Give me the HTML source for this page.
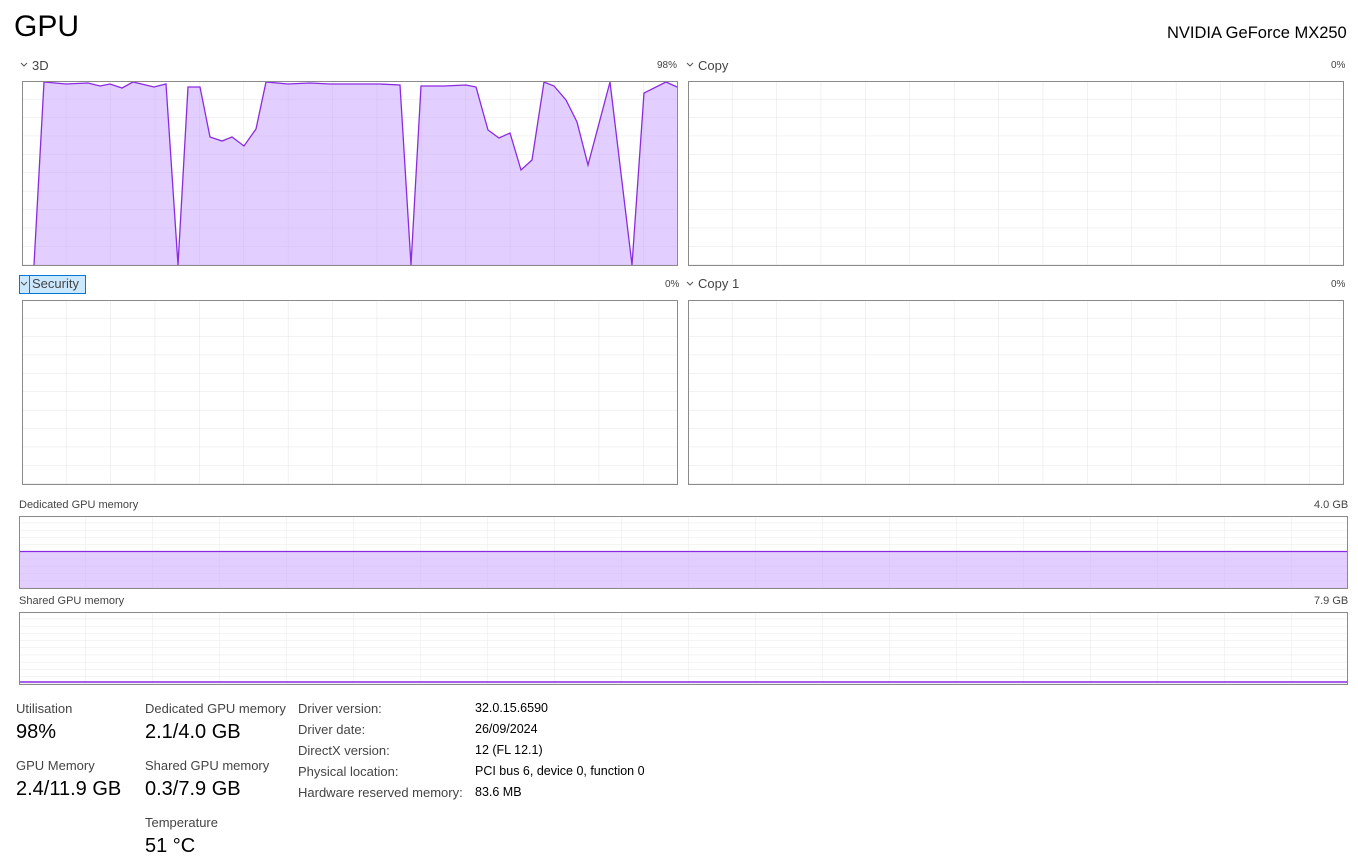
<!DOCTYPE html>
<html><head><meta charset="utf-8"><style>
body{margin:0;width:1358px;height:867px;background:#fff;font-family:"Liberation Sans",sans-serif;color:#000;position:relative;overflow:hidden}
.t{position:absolute;white-space:nowrap}
.s{font-size:12px;color:#444}
.l{font-size:13px;color:#444}
.v{font-size:20px;color:#000}
.d{font-size:12.5px;color:#000}
</style></head><body>
<svg width="1358" height="867" style="position:absolute;left:0;top:0">
<defs>
<pattern id="g1" x="22" y="81" width="44.4" height="18.4" patternUnits="userSpaceOnUse">
<path d="M44.4 0V18.4M0 18.4H44.4" stroke="#e4e4e4" stroke-width="1" fill="none"/></pattern>
<pattern id="g2" x="688" y="81" width="44.4" height="18.4" patternUnits="userSpaceOnUse">
<path d="M44.4 0V18.4M0 18.4H44.4" stroke="#e4e4e4" stroke-width="1" fill="none"/></pattern>
<pattern id="g3" x="22" y="300" width="44.4" height="18.4" patternUnits="userSpaceOnUse">
<path d="M44.4 0V18.4M0 18.4H44.4" stroke="#e4e4e4" stroke-width="1" fill="none"/></pattern>
<pattern id="g4" x="688" y="300" width="44.4" height="18.4" patternUnits="userSpaceOnUse">
<path d="M44.4 0V18.4M0 18.4H44.4" stroke="#e4e4e4" stroke-width="1" fill="none"/></pattern>
<pattern id="g5" x="19" y="516" width="67" height="7.2" patternUnits="userSpaceOnUse">
<path d="M67 0V7.2M0 7.2H67" stroke="#e8e8e8" stroke-width="1" fill="none"/></pattern>
<pattern id="g6" x="19" y="612" width="67" height="7.2" patternUnits="userSpaceOnUse">
<path d="M67 0V7.2M0 7.2H67" stroke="#e8e8e8" stroke-width="1" fill="none"/></pattern>
</defs>
<rect x="22" y="81" width="655" height="184" fill="url(#g1)"/>
<polygon fill="rgba(200,160,255,0.5)" points="34,265 44,82 66,84 88,83 100,86 110,84 122,88 133,82 154,87 166,84 178,265 188,87 200,87 210,137 222,141 232,137 244,146 256,129 266,82 288,84 310,83 330,84 355,84 380,84 400,85 411,265 421,86 444,86 466,85 476,87 488,130 499,138 510,133 521,170 532,160 544,82 554,86 566,100 577,122 588,165 610,82 632,265 644,93 666,82 677,87 677,265"/>
<polyline fill="none" stroke="#8a2be2" stroke-width="1.3" points="34,265 44,82 66,84 88,83 100,86 110,84 122,88 133,82 154,87 166,84 178,265 188,87 200,87 210,137 222,141 232,137 244,146 256,129 266,82 288,84 310,83 330,84 355,84 380,84 400,85 411,265 421,86 444,86 466,85 476,87 488,130 499,138 510,133 521,170 532,160 544,82 554,86 566,100 577,122 588,165 610,82 632,265 644,93 666,82 677,87"/>
<rect x="22.5" y="81.5" width="655" height="184" fill="none" stroke="#8a8a8a"/>
<rect x="688" y="81" width="655" height="184" fill="url(#g2)"/>
<rect x="688.5" y="81.5" width="655" height="184" fill="none" stroke="#8a8a8a"/>
<rect x="22" y="300" width="655" height="184" fill="url(#g3)"/>
<rect x="22.5" y="300.5" width="655" height="184" fill="none" stroke="#8a8a8a"/>
<rect x="688" y="300" width="655" height="184" fill="url(#g4)"/>
<rect x="688.5" y="300.5" width="655" height="184" fill="none" stroke="#8a8a8a"/>
<rect x="19" y="516" width="1328" height="72" fill="url(#g5)"/>
<rect x="19" y="551" width="1328" height="37" fill="rgba(200,160,255,0.5)"/>
<line x1="19" y1="551.5" x2="1347" y2="551.5" stroke="#8a2be2" stroke-width="1.3"/>
<line x1="19.5" y1="551" x2="19.5" y2="588" stroke="#8a2be2"/>
<rect x="19.5" y="516.5" width="1328" height="72" fill="none" stroke="#8a8a8a"/>
<rect x="19" y="612" width="1328" height="72" fill="url(#g6)"/>
<line x1="19" y1="682" x2="1347" y2="682" stroke="#8a2be2" stroke-width="1.5"/>
<rect x="19.5" y="612.5" width="1328" height="72" fill="none" stroke="#8a8a8a"/>
<rect x="19.5" y="275.5" width="66" height="18" fill="#cce8ff" stroke="#0078d7"/>
<line x1="29.5" y1="276" x2="29.5" y2="293" stroke="#0078d7"/>
<path d="M21 63l3 3 3-3" fill="none" stroke="#555"/>
<path d="M687 63l3 3 3-3" fill="none" stroke="#555"/>
<path d="M687 282l3 3 3-3" fill="none" stroke="#555"/>
<path d="M21 282l3 3 3-3" fill="none" stroke="#555"/>
</svg>
<div class="t" style="left:14px;top:10px;font-size:30px">GPU</div>
<div class="t" style="left:1167px;top:24px;font-size:16.5px">NVIDIA GeForce MX250</div>
<div class="t l" style="left:32px;top:58px">3D</div>
<div class="t s" style="left:657px;top:60px;font-size:10px">98%</div>
<div class="t l" style="left:698px;top:58px">Copy</div>
<div class="t s" style="left:1331px;top:60px;font-size:10px">0%</div>
<div class="t l" style="left:32px;top:276px">Security</div>
<div class="t s" style="left:665px;top:279px;font-size:10px">0%</div>
<div class="t l" style="left:698px;top:276px">Copy 1</div>
<div class="t s" style="left:1331px;top:279px;font-size:10px">0%</div>
<div class="t s" style="left:19px;top:499px;font-size:11px">Dedicated GPU memory</div>
<div class="t s" style="left:1314px;top:499px;font-size:11px">4.0 GB</div>
<div class="t s" style="left:19px;top:595px;font-size:11px">Shared GPU memory</div>
<div class="t s" style="left:1314px;top:595px;font-size:11px">7.9 GB</div>
<div class="t l" style="left:16px;top:701px">Utilisation</div>
<div class="t v" style="left:16px;top:721px">98%</div>
<div class="t l" style="left:16px;top:758px">GPU Memory</div>
<div class="t v" style="left:16px;top:778px">2.4/11.9 GB</div>
<div class="t l" style="left:145px;top:701px">Dedicated GPU memory</div>
<div class="t v" style="left:145px;top:721px">2.1/4.0 GB</div>
<div class="t l" style="left:145px;top:758px">Shared GPU memory</div>
<div class="t v" style="left:145px;top:778px">0.3/7.9 GB</div>
<div class="t l" style="left:145px;top:815px">Temperature</div>
<div class="t v" style="left:145px;top:835px">51 °C</div>
<div class="t l" style="left:298px;top:701px">Driver version:</div>
<div class="t l" style="left:298px;top:722px">Driver date:</div>
<div class="t l" style="left:298px;top:743px">DirectX version:</div>
<div class="t l" style="left:298px;top:764px">Physical location:</div>
<div class="t l" style="left:298px;top:785px">Hardware reserved memory:</div>
<div class="t d" style="left:475px;top:701px">32.0.15.6590</div>
<div class="t d" style="left:475px;top:722px">26/09/2024</div>
<div class="t d" style="left:475px;top:743px">12 (FL 12.1)</div>
<div class="t d" style="left:475px;top:764px">PCI bus 6, device 0, function 0</div>
<div class="t d" style="left:475px;top:785px">83.6 MB</div>
</body></html>
